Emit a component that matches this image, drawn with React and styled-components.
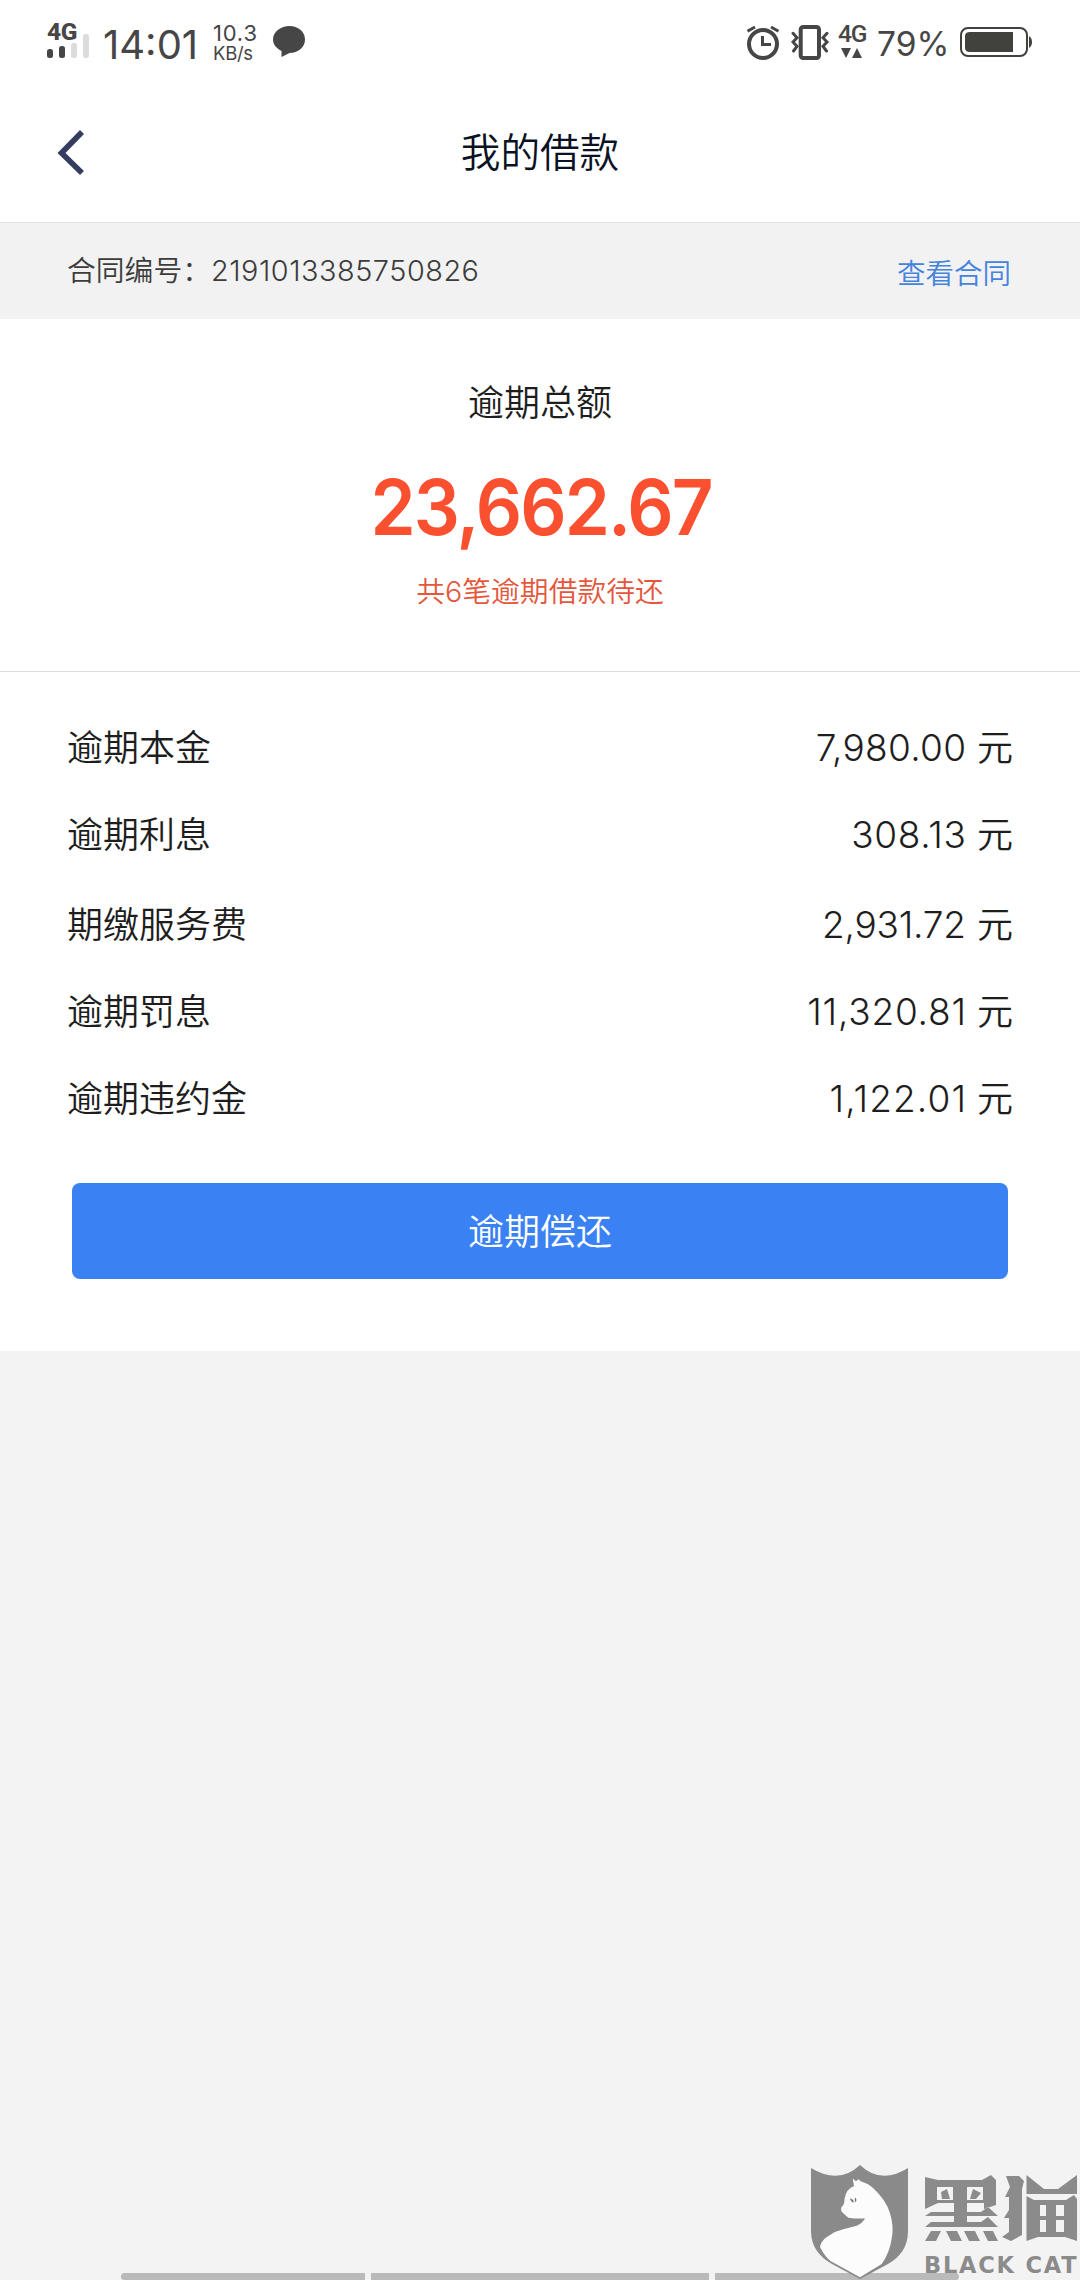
import React from "react";
import styled, { createGlobalStyle } from "styled-components";

const cjk = `"Noto Sans CJK SC", sans-serif`;
const latin = `Inter, "Noto Sans CJK SC", sans-serif`;
const narrow = `Roboto, "Noto Sans CJK SC", sans-serif`;

const GlobalStyle = createGlobalStyle`
  * { box-sizing: border-box; }
  body { margin: 0; background: #f3f3f3; font-family: ${latin}; }
`;

const Screen = styled.div`
  position: relative;
  width: 1080px;
  height: 2280px;
  overflow: hidden;
  display: flex;
  flex-direction: column;
  background: #f3f3f3;
`;

const StatusBar = styled.header`
  height: 84px;
  flex: none;
  display: flex;
  justify-content: space-between;
  align-items: flex-start;
  padding: 0 47px;
  background: #fff;
  color: #464646;
`;

const StatusGroup = styled.div`
  display: flex;
  align-items: flex-start;
`;

const Signal = styled.div`
  width: 44px;
  padding-top: 22px;
  display: grid;
  grid-template-rows: 20px 16px;
`;

const NetLabel = styled.span`
  font-family: ${narrow};
  font-size: 24.5px;
  font-weight: ${(p) => p.$weight};
  line-height: 20px;
  letter-spacing: ${(p) => p.$spacing}px;
`;

const Bars = styled.div`
  display: flex;
  align-items: flex-end;
  gap: 6px;
`;

const Bar = styled.i`
  width: 6px;
  height: ${(p) => p.$h}px;
  border-radius: 2.5px;
  background: ${(p) => (p.$on ? "#464646" : "#dcdcdc")};
`;

const Clock = styled.span`
  width: 97px;
  margin: 21px 0 0 12px;
  font-size: 40px;
  line-height: 48px;
  white-space: nowrap;
`;

const Speed = styled.div`
  width: 60px;
  margin: 23px 0 0 13px;
  display: grid;
  grid-template-rows: 20px 20px;
`;

const SpeedLine = styled.span`
  font-size: ${(p) => p.$size}px;
  line-height: 20px;
  letter-spacing: ${(p) => p.$spacing}px;
`;

const StatusIcon = styled.svg`
  display: block;
  flex: none;
  margin: ${(p) => p.$top}px 0 0 ${(p) => p.$left || 0}px;
`;

const Data = styled.div`
  width: 29px;
  margin: 24px 0 0 7px;
  display: flex;
  flex-direction: column;
`;

const Percent = styled.span`
  width: 72px;
  margin: 22px 0 0 10px;
  font-size: 33.5px;
  line-height: 44px;
`;

const NavBar = styled.nav`
  height: 138px;
  flex: none;
  display: grid;
  grid-template-columns: 100px 1fr 100px;
  align-items: start;
  background: #fff;
`;

const BackIcon = styled.svg`
  margin: 44px 0 0 56px;
`;

const Title = styled.h1`
  margin: 36px 0 0;
  text-align: center;
  font: 350 39.6px/60px ${cjk};
  color: #0a1224;
`;

const ContractBar = styled.section`
  height: 97px;
  flex: none;
  display: flex;
  justify-content: space-between;
  padding: 0 69px 0 67px;
  border-top: 1px solid #e2e2e2;
  background: #f2f2f2;
`;

const ContractNo = styled.div`
  display: flex;
  margin-top: 25px;
  font: 350 28.8px/42px ${cjk};
  color: #3c3c3c;
`;

const Digits = styled.span`
  padding-top: 2px;
  font-family: ${latin};
  font-weight: 300;
  letter-spacing: 0.55px;
`;

const Link = styled.a`
  margin-top: 28px;
  font: 350 28.5px/42px ${cjk};
  color: #4583dc;
`;

const Card = styled.main`
  height: 1032px;
  flex: none;
  background: #fff;
`;

const Summary = styled.section`
  height: 353px;
  border-bottom: 1px solid #dedede;
  display: flex;
  flex-direction: column;
  align-items: center;
`;

const SummaryLabel = styled.div`
  margin-top: 54px;
  font: 350 36px/54px ${cjk};
  color: #1e1e1e;
`;

const Total = styled.div`
  margin: 33px 0 0 2px;
  font: 600 77px/94px ${latin};
  letter-spacing: -2px;
  transform: scaleX(0.942);
  color: #fb502f;
`;

const Note = styled.div`
  margin-top: 17px;
  font: 350 28.8px/42px ${latin};
  color: #e4573c;
`;

const Rows = styled.dl`
  margin: 0;
  padding: 30px 67px 0 67px;
  display: grid;
  grid-template-rows: 87px 90px 87px 87px 87px;
`;

const Row = styled.div`
  display: flex;
  justify-content: space-between;
  font: 350 36px/87px ${cjk};
  color: #1e1e1e;
`;

const Cell = styled.span`
  display: flex;
  align-items: baseline;
  gap: ${(p) => p.$gap || 0}px;
`;

const Value = styled.span`
  font: 300 37px/87px ${latin};
  letter-spacing: ${(p) => p.$spacing}px;
`;

const PayButton = styled.button`
  display: block;
  width: 936px;
  height: 96px;
  margin: 43px auto 0;
  border: 0;
  border-radius: 8px;
  background: #3a81f3;
  color: #fff;
  font: 350 36px/92px ${cjk};
  padding: 0 0 5px;
`;

const Watermark = styled.div`
  position: absolute;
  left: 808px;
  top: 2162px;
  display: flex;
`;

const Brand = styled.div`
  width: 156px;
  margin-left: 12px;
  color: #8c8b8c;
`;

const BrandArt = styled.svg`
  display: block;
  margin-top: 13px;
`;

const BrandName = styled.div`
  margin-top: 11px;
  font: bold 22.5px/24px "DejaVu Sans", sans-serif;
  letter-spacing: 1.8px;
  white-space: nowrap;
`;

const HomeBars = styled.div`
  position: absolute;
  left: 121px;
  bottom: 0;
  display: flex;
  gap: 6px;
`;

const HomeBar = styled.i`
  width: ${(p) => p.$w}px;
  height: 7px;
  border-radius: ${(p) => p.$radius};
  background: #bababa;
`;

const charges = [
  ["逾期本金", "7,980.00", 0.3],
  ["逾期利息", "308.13", 0.7],
  ["期缴服务费", "2,931.72", -0.2],
  ["逾期罚息", "11,320.81", 0.8],
  ["逾期违约金", "1,122.01", 1.1],
];

const Alarm = () => (
  <StatusIcon $top={24} width="34" height="37" viewBox="1 0 34 37" fill="none" stroke="#464646">
    <circle cx="17" cy="20" r="14" strokeWidth="4" />
    <path d="M16.5 12v8.5H25" strokeWidth="3" />
    <path d="M1.5 7.2 9 3M32.5 7.2 25 3" strokeWidth="3" />
  </StatusIcon>
);

const Vibrate = () => (
  <StatusIcon $top={24} $left={10} width="40" height="37" viewBox="0 0 40 37" fill="none" stroke="#464646">
    <rect x="9.7" y="3" width="18.3" height="31" rx="2.5" strokeWidth="4" />
    <path d="M2 9.300L6 13.700 2 18l4 4.300L2.500 27M36 9.300L32 13.700 36 18l-4 4.300L35.500 27" strokeWidth="3" strokeLinecap="round" />
  </StatusIcon>
);

const Battery = () => (
  <StatusIcon $top={27} $left={11} width="73" height="31" viewBox="0 0 73 31">
    <rect x="1" y="1" width="66" height="28" rx="7" fill="none" stroke="#41423d" strokeWidth="2" />
    <path d="M10 5H53V25H10Q5 25 5 21V9Q5 5 10 5Z" fill="#41423d" />
    <path d="M69 9q3 2 3 6t-3 6z" fill="#41423d" />
  </StatusIcon>
);

const CatShield = () => (
  <svg width="104" height="118" viewBox="0 0 104 118">
    <path
      d="M3 6Q31 23 52 3Q73 23 100 6V69C100 85 92 95 80 102L52 117L24 102C12 95 3 85 3 69Z"
      fill="#8b8a8b"
    />
    <path
      d="M44.700 16.500L48 19.300L50.500 17.300L52.700 19.300Q61 22 65.300 26.300Q78 38 82 51.300Q85.500 63 84.300 73Q82 91 73.700 102L52 115.300L22 98.700Q15 92 12 84.700Q13 78 22 73Q28 69 35.300 67.300L48.700 63.700Q55 61 57 56.300Q50 57 40.300 55.700L35.300 51.300Q32 49 33.500 45Q36.500 43 36.500 37Q38 27 46 24Z"
      fill="#fcfcfc"
    />
    <path d="M42 36.500q3 0 4 4-3 0-4-4zM47 35.500q2.500 2 .5 5-1.500-2.500-.5-5z" fill="#777" />
  </svg>
);

const BrandCharacters = () => (
  <BrandArt width="154" height="67" viewBox="0 0 154 67" fill="#8c8b8c" fillRule="evenodd">
    <path d="M1 2L14 5H58L67 0L72 5V30L60 34V28H43V37H57L64 32L74 41H43V47H57L64 42L74 52H1L7 47H30V41H1L7 37H30V28H14L1 34ZM13 12V25H29V12ZM43 12V25H59V12Z" />
    <path d="M17 17L23 14L26 24H18ZM49 14L57 18L52 24H46ZM7 56H17L12 66H1ZM22 56H33L38 66H27ZM40 56H51L56 66H45ZM59 56H69L74 66H64Z" />
    <path d="M82 1H95L100 6L98 14V60L87 66L78 62L85 57V43H80L85 35V22H81L86 12ZM102.500 0L120 14H134L153 0V19H102.500ZM102.500 21L110 25H142L150 20L153 24V66L141 62H114L102.500 66ZM116 30V41H122V30ZM132 30V41H140V30ZM116 45V57H122V45ZM132 45V57H140V45Z" />
  </BrandArt>
);

export default function App() {
  return (
    <Screen>
      <GlobalStyle />
      <StatusBar>
        <StatusGroup>
          <Signal>
            <NetLabel $weight={800} $spacing={-0.5}>4G</NetLabel>
            <Bars>
              <Bar $h={9} $on />
              <Bar $h={12} $on />
              <Bar $h={15} />
              <Bar $h={24} />
            </Bars>
          </Signal>
          <Clock>14:01</Clock>
          <Speed>
            <SpeedLine $size={22} $spacing={0.8}>10.3</SpeedLine>
            <SpeedLine $size={18.5} $spacing={-0.3}>KB/s</SpeedLine>
          </Speed>
          <StatusIcon $top={25} width="33" height="33" viewBox="0 0 33 33">
            <path d="M16.500 1C25 1 32 6.500 32 14.500S25 28 16.500 28L8.500 32V26C3.500 23.500 0 19.500 0 14.500 0 6.500 8 1 16.500 1Z" fill="#464646" />
          </StatusIcon>
        </StatusGroup>
        <StatusGroup>
          <Alarm />
          <Vibrate />
          <Data>
            <NetLabel $weight={500} $spacing={-1.2}>4G</NetLabel>
            <svg width="28" height="15" viewBox="0 0 28 15" fill="#464646">
              <path d="M3 4h10l-5 10zM14 14h10L19 4z" />
            </svg>
          </Data>
          <Percent>79%</Percent>
          <Battery />
        </StatusGroup>
      </StatusBar>
      <NavBar>
        <BackIcon width="32" height="50" viewBox="0 0 32 50" fill="none" stroke="#343d60" strokeWidth="5.6">
          <path d="M26 4L5.500 25L26 45" />
        </BackIcon>
        <Title>我的借款</Title>
      </NavBar>
      <ContractBar>
        <ContractNo>
          合同编号：<Digits>2191013385750826</Digits>
        </ContractNo>
        <Link>查看合同</Link>
      </ContractBar>
      <Card>
        <Summary>
          <SummaryLabel>逾期总额</SummaryLabel>
          <Total>23,662.67</Total>
          <Note>共6笔逾期借款待还</Note>
        </Summary>
        <Rows>
          {charges.map(([label, value, spacing]) => (
            <Row key={label}>
              <Cell>{label}</Cell>
              <Cell $gap={11 - spacing}>
                <Value $spacing={spacing}>{value}</Value>元
              </Cell>
            </Row>
          ))}
        </Rows>
        <PayButton>逾期偿还</PayButton>
      </Card>
      <HomeBars>
        <HomeBar $w={244} $radius="4px 0 0 4px" />
        <HomeBar $w={338} $radius="0" />
        <HomeBar $w={244} $radius="0 4px 4px 0" />
      </HomeBars>
      <Watermark>
        <CatShield />
        <Brand>
          <BrandCharacters />
          <BrandName>BLACK CAT</BrandName>
        </Brand>
      </Watermark>
    </Screen>
  );
}
